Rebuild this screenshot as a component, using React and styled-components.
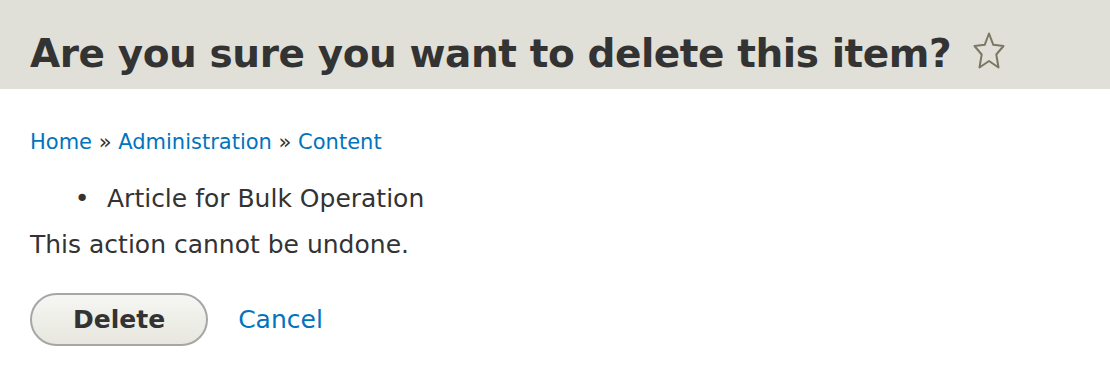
import React from 'react';
import styled, { createGlobalStyle } from 'styled-components';

const GlobalStyle = createGlobalStyle`
  html, body {
    margin: 0;
    padding: 0;
    background: #fff;
  }
  body {
    font-family: "DejaVu Sans", "Liberation Sans", sans-serif;
    color: #333;
  }
`;

const Header = styled.header`
  background: #e0e0d8;
  height: 89px;
  padding: 31px 30px 0;
  box-sizing: border-box;
`;

const Title = styled.h1`
  margin: 0;
  font-size: 39px;
  line-height: 45px;
  font-weight: bold;
  color: #333;
  display: flex;
  align-items: center;
  gap: 22px;
  letter-spacing: -0.43px;
`;

const StarButton = styled.span`
  display: inline-flex;
  width: 32px;
  height: 37px;
  margin-top: -7px;
`;

const Main = styled.main`
  padding: 41px 30px 0;
`;

const Breadcrumb = styled.nav`
  font-size: 21px;
  line-height: 24px;
  color: #333;
  margin-bottom: 30px;
`;

const Link = styled.a`
  color: #0074bd;
  text-decoration: none;
`;

const List = styled.ul`
  margin: 0 0 16px;
  padding-left: 77px;
  font-size: 25px;
  line-height: 30px;

  li::marker {
    content: "•\\2002\\2009";
  }
`;

const Text = styled.p`
  margin: 0 0 33px;
  font-size: 25px;
  line-height: 30px;
`;

const Actions = styled.div`
  display: flex;
  align-items: center;
  gap: 30px;
`;

const Button = styled.button`
  font-family: inherit;
  font-size: 25px;
  font-weight: bold;
  color: #333;
  height: 53px;
  padding: 0 41px;
  border: 2px solid #a6a6a6;
  border-radius: 27px;
  background: linear-gradient(to bottom, #f6f6f3, #e7e7df);
`;

const CancelLink = styled(Link)`
  font-size: 25px;
`;

function Star() {
  return (
    <svg viewBox="0 0 32 37" width="32" height="37">
      <path
        d="M16 1.5 L20.3 12.8 L30.5 14 L23.3 22.5 L25.5 35.5 L16 29 L6.5 35.5 L8.7 22.5 L1.5 14 L11.7 12.8 Z"
        fill="none"
        stroke="#7a7763"
        strokeWidth="2"
        strokeLinejoin="round"
      />
    </svg>
  );
}

export default function App() {
  return (
    <>
      <GlobalStyle />
      <Header>
        <Title>
          Are you sure you want to delete this item?
          <StarButton><Star /></StarButton>
        </Title>
      </Header>
      <Main>
        <Breadcrumb>
          <Link href="#">Home</Link> » <Link href="#">Administration</Link> » <Link href="#">Content</Link>
        </Breadcrumb>
        <List>
          <li>Article for Bulk Operation</li>
        </List>
        <Text>This action cannot be undone.</Text>
        <Actions>
          <Button type="button">Delete</Button>
          <CancelLink href="#">Cancel</CancelLink>
        </Actions>
      </Main>
    </>
  );
}
